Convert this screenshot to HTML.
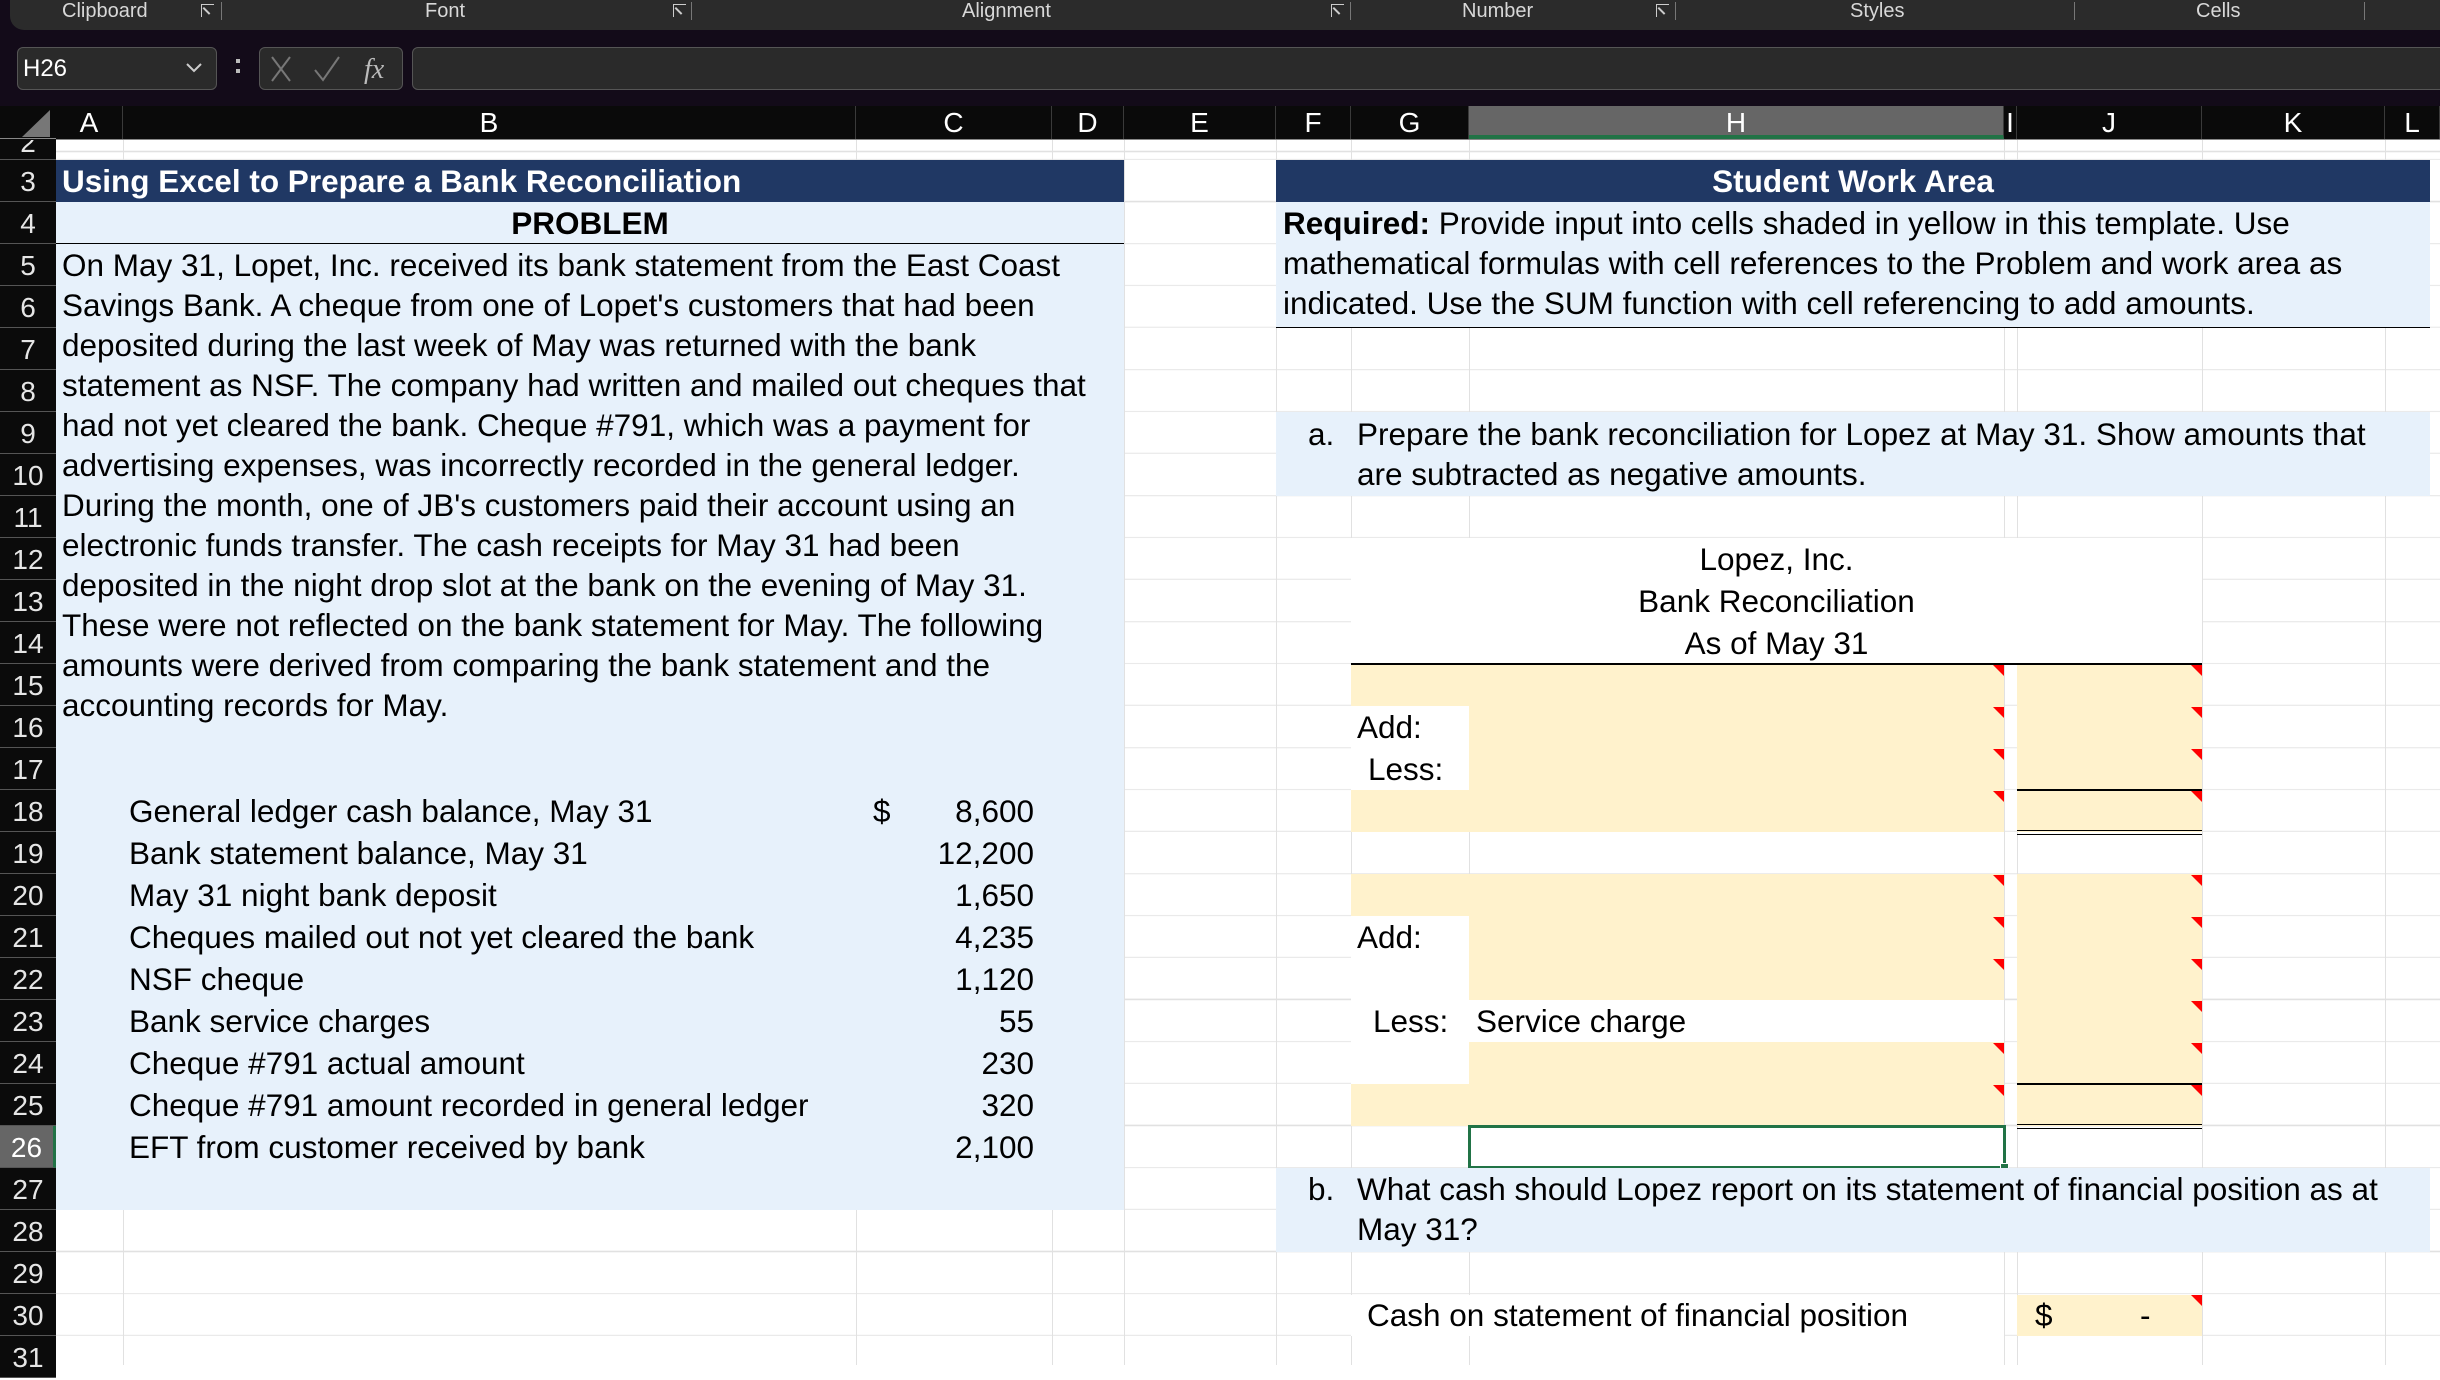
<!DOCTYPE html>
<html><head><meta charset="utf-8">
<style>
*{margin:0;padding:0;box-sizing:border-box}
body{width:2440px;height:1365px;overflow:hidden;background:#fff;position:relative;font-family:"Liberation Sans",Arial,sans-serif}
.a{position:absolute}
.t{position:absolute;font-size:31.5px;line-height:42px;white-space:nowrap;color:#000}
.p{line-height:40px}
.rib{color:#d8d8d8;font-size:20px;line-height:22px;top:0}
.ch{position:absolute;top:106px;height:33px;color:#fff;font-size:28px;line-height:34px;text-align:center;background:#0a0a0a;border-right:1px solid #3a3a3a}
.rh{position:absolute;left:0;width:56px;height:42px;color:#e6e6e6;font-size:28px;line-height:44px;text-align:center;background:#0b0b0b;border-bottom:1px solid #555}
.vl{position:absolute;top:139px;bottom:0;width:1px;background:#e1e1e1}
.y{position:absolute;background:#fff2cc}
.lb{position:absolute;background:#e7f1fb}
.w{position:absolute;background:#fff}
.tri{position:absolute;width:0;height:0;border-top:11px solid #f00;border-left:11px solid transparent}
.num{position:absolute;font-size:31.5px;line-height:42px;text-align:right;width:200px}
.dl{position:absolute;top:4px;width:13px;height:13px;border:1.5px solid #ccc;border-right:none;border-bottom:none}
.dl:after{content:"";position:absolute;left:2px;top:2px;width:9px;height:1.5px;background:#ccc;transform:rotate(45deg);transform-origin:0 0}
</style></head><body>
<div class="a" style="left:0;top:0;width:2440px;height:106px;background:#130b19"></div>
<div class="a" style="left:10px;top:0;width:2430px;height:30px;background:#2b2b2b;border-radius:0 0 0 14px"></div>
<div class="t rib" style="left:62px">Clipboard</div>
<div class="t rib" style="left:425px">Font</div>
<div class="t rib" style="left:962px">Alignment</div>
<div class="t rib" style="left:1462px">Number</div>
<div class="t rib" style="left:1850px">Styles</div>
<div class="t rib" style="left:2196px">Cells</div>
<div class="dl" style="left:201px"></div>
<div class="a" style="left:221px;top:2px;width:1px;height:18px;background:#777"></div>
<div class="dl" style="left:673px"></div>
<div class="a" style="left:691px;top:2px;width:1px;height:18px;background:#777"></div>
<div class="dl" style="left:1331px"></div>
<div class="a" style="left:1350px;top:2px;width:1px;height:18px;background:#777"></div>
<div class="dl" style="left:1656px"></div>
<div class="a" style="left:1675px;top:2px;width:1px;height:18px;background:#777"></div>
<div class="a" style="left:2074px;top:2px;width:1px;height:18px;background:#777"></div>
<div class="a" style="left:2364px;top:2px;width:1px;height:18px;background:#777"></div>
<div class="a" style="left:17px;top:47px;width:200px;height:43px;background:#2a2a2a;border:1px solid #555;border-radius:6px"></div>
<div class="t" style="left:23px;top:47px;color:#fff;font-size:24px;line-height:43px">H26</div>
<svg class="a" style="left:185px;top:62px" width="18" height="12"><path d="M2 2 L9 9 L16 2" stroke="#ccc" stroke-width="2" fill="none"/></svg>
<div class="a" style="left:236px;top:59px;width:4px;height:4px;background:#bbb"></div>
<div class="a" style="left:236px;top:69px;width:4px;height:4px;background:#bbb"></div>
<div class="a" style="left:259px;top:47px;width:144px;height:43px;background:#2a2a2a;border:1px solid #555;border-radius:6px"></div>
<svg class="a" style="left:268px;top:53px" width="130" height="32"><path d="M4 4 L22 28 M22 4 L4 28" stroke="#777" stroke-width="2"/><path d="M47 17 L55 27 L71 4" stroke="#777" stroke-width="2" fill="none"/><text x="96" y="25" fill="#bbb" font-family="Liberation Serif" font-style="italic" font-size="28">fx</text></svg>
<div class="a" style="left:412px;top:47px;width:2040px;height:43px;background:#2a2a2a;border:1px solid #555;border-radius:6px"></div>

<div class="a" style="left:56px;top:139px;right:0;bottom:0;background:repeating-linear-gradient(to bottom,#e1e1e1 0,#e1e1e1 1px,transparent 1px,transparent 42px);background-position:0 20px"></div>
<div class="vl" style="left:123px"></div><div class="vl" style="left:856px"></div><div class="vl" style="left:1052px"></div><div class="vl" style="left:1124px"></div><div class="vl" style="left:1276px"></div><div class="vl" style="left:1351px"></div><div class="vl" style="left:1469px"></div><div class="vl" style="left:2004px"></div><div class="vl" style="left:2017px"></div><div class="vl" style="left:2202px"></div><div class="vl" style="left:2385px"></div>

<div class="a" style="left:0;top:106px;width:2440px;height:34px;background:#0a0a0a;border-bottom:2px solid #888"></div>
<div class="a" style="left:22px;top:110px;width:0;height:0;border-bottom:27px solid #777;border-left:28px solid transparent"></div>
<div class="ch" style="left:56px;width:67px">A</div>
<div class="ch" style="left:123px;width:733px">B</div>
<div class="ch" style="left:856px;width:196px">C</div>
<div class="ch" style="left:1052px;width:72px">D</div>
<div class="ch" style="left:1124px;width:152px">E</div>
<div class="ch" style="left:1276px;width:75px">F</div>
<div class="ch" style="left:1351px;width:118px">G</div>
<div class="ch" style="left:1469px;width:535px;background:#666;border-bottom:4px solid #217346">H</div>
<div class="ch" style="left:2004px;width:13px">I</div>
<div class="ch" style="left:2017px;width:185px">J</div>
<div class="ch" style="left:2202px;width:183px">K</div>
<div class="ch" style="left:2385px;width:55px">L</div>

<div class="a" style="left:0;top:139px;width:56px;height:1226px;background:#0b0b0b"></div>
<div class="rh" style="top:118px;height:42px;line-height:50px;overflow:hidden;clip-path:inset(22px 0 0 0)">2</div>
<div class="rh" style="top:160px">3</div><div class="rh" style="top:202px">4</div><div class="rh" style="top:244px">5</div><div class="rh" style="top:286px">6</div><div class="rh" style="top:328px">7</div><div class="rh" style="top:370px">8</div><div class="rh" style="top:412px">9</div><div class="rh" style="top:454px">10</div><div class="rh" style="top:496px">11</div><div class="rh" style="top:538px">12</div><div class="rh" style="top:580px">13</div><div class="rh" style="top:622px">14</div><div class="rh" style="top:664px">15</div><div class="rh" style="top:706px">16</div><div class="rh" style="top:748px">17</div><div class="rh" style="top:790px">18</div><div class="rh" style="top:832px">19</div><div class="rh" style="top:874px">20</div><div class="rh" style="top:916px">21</div><div class="rh" style="top:958px">22</div><div class="rh" style="top:1000px">23</div><div class="rh" style="top:1042px">24</div><div class="rh" style="top:1084px">25</div>
<div class="rh" style="top:1126px;background:#666;border-right:3px solid #217346;color:#fff">26</div>
<div class="rh" style="top:1168px">27</div><div class="rh" style="top:1210px">28</div><div class="rh" style="top:1252px">29</div><div class="rh" style="top:1294px">30</div><div class="rh" style="top:1336px">31</div>

<div class="a" style="left:56px;top:160px;width:1068px;height:42px;background:#203864"></div>
<div class="t" style="left:62px;top:160px;color:#fff;font-weight:bold">Using Excel to Prepare a Bank Reconciliation</div>
<div class="lb" style="left:56px;top:202px;width:1068px;height:1008px"></div>
<div class="a" style="left:56px;top:243px;width:1068px;height:1px;background:#000"></div>
<div class="t" style="left:56px;top:202px;width:1068px;text-align:center;font-weight:bold">PROBLEM</div>
<div class="t p" style="left:62px;top:245px">On May 31, Lopet, Inc. received its bank statement from the East Coast<br>Savings Bank. A cheque from one of Lopet's customers that had been<br>deposited during the last week of May was returned with the bank<br>statement as NSF. The company had written and mailed out cheques that<br>had not yet cleared the bank. Cheque #791, which was a payment for<br>advertising expenses, was incorrectly recorded in the general ledger.<br>During the month, one of JB's customers paid their account using an<br>electronic funds transfer. The cash receipts for May 31 had been<br>deposited in the night drop slot at the bank on the evening of May 31.<br>These were not reflected on the bank statement for May. The following<br>amounts were derived from comparing the bank statement and the<br>accounting records for May.</div>

<div class="t" style="left:129px;top:790px">General ledger cash balance, May 31</div>
<div class="t" style="left:129px;top:832px">Bank statement balance, May 31</div>
<div class="t" style="left:129px;top:874px">May 31 night bank deposit</div>
<div class="t" style="left:129px;top:916px">Cheques mailed out not yet cleared the bank</div>
<div class="t" style="left:129px;top:958px">NSF cheque</div>
<div class="t" style="left:129px;top:1000px">Bank service charges</div>
<div class="t" style="left:129px;top:1042px">Cheque #791 actual amount</div>
<div class="t" style="left:129px;top:1084px">Cheque #791 amount recorded in general ledger</div>
<div class="t" style="left:129px;top:1126px">EFT from customer received by bank</div>
<div class="t" style="left:873px;top:790px">$</div>
<div class="num" style="left:834px;top:790px">8,600</div>
<div class="num" style="left:834px;top:832px">12,200</div>
<div class="num" style="left:834px;top:874px">1,650</div>
<div class="num" style="left:834px;top:916px">4,235</div>
<div class="num" style="left:834px;top:958px">1,120</div>
<div class="num" style="left:834px;top:1000px">55</div>
<div class="num" style="left:834px;top:1042px">230</div>
<div class="num" style="left:834px;top:1084px">320</div>
<div class="num" style="left:834px;top:1126px">2,100</div>

<div class="a" style="left:1276px;top:160px;width:1154px;height:42px;background:#203864"></div>
<div class="t" style="left:1276px;top:160px;width:1154px;text-align:center;color:#fff;font-weight:bold">Student Work Area</div>
<div class="lb" style="left:1276px;top:202px;width:1154px;height:126px"></div>
<div class="a" style="left:1276px;top:327px;width:1154px;height:1px;background:#000"></div>
<div class="t p" style="left:1283px;top:203px"><b>Required:</b> Provide input into cells shaded in yellow in this template. Use<br>mathematical formulas with cell references to the Problem and work area as<br>indicated. Use the SUM function with cell referencing to add amounts.</div>

<div class="lb" style="left:1276px;top:412px;width:1154px;height:84px"></div>
<div class="t" style="left:1308px;top:414px;line-height:40px">a.</div>
<div class="t p" style="left:1357px;top:414px">Prepare the bank reconciliation for Lopez at May 31. Show amounts that<br>are subtracted as negative amounts.</div>

<div class="w" style="left:1351px;top:538px;width:851px;height:126px"></div>
<div class="t" style="left:1351px;top:538px;width:851px;text-align:center">Lopez, Inc.</div>
<div class="t" style="left:1351px;top:580px;width:851px;text-align:center">Bank Reconciliation</div>
<div class="t" style="left:1351px;top:622px;width:851px;text-align:center">As of May 31</div>
<div class="a" style="left:1351px;top:663px;width:851px;height:2px;background:#000"></div>

<div class="y" style="left:1351px;top:665px;width:653px;height:41px"></div>
<div class="w" style="left:1351px;top:706px;width:118px;height:84px"></div>
<div class="y" style="left:1469px;top:706px;width:535px;height:84px"></div>
<div class="y" style="left:1351px;top:790px;width:653px;height:42px"></div>
<div class="t" style="left:1357px;top:706px">Add:</div>
<div class="t" style="left:1368px;top:748px">Less:</div>
<div class="y" style="left:2017px;top:665px;width:185px;height:167px"></div>
<div class="a" style="left:2017px;top:789px;width:185px;height:2px;background:#000"></div>
<div class="a" style="left:2017px;top:830px;width:185px;height:5px;border-top:1px solid #000;border-bottom:1px solid #000"></div>

<div class="y" style="left:1351px;top:874px;width:653px;height:42px"></div>
<div class="w" style="left:1351px;top:916px;width:118px;height:168px"></div>
<div class="y" style="left:1469px;top:916px;width:535px;height:84px"></div>
<div class="w" style="left:1469px;top:1000px;width:535px;height:42px"></div>
<div class="y" style="left:1469px;top:1042px;width:535px;height:42px"></div>
<div class="y" style="left:1351px;top:1084px;width:653px;height:42px"></div>
<div class="t" style="left:1357px;top:916px">Add:</div>
<div class="t" style="left:1373px;top:1000px">Less:</div>
<div class="t" style="left:1476px;top:1000px">Service charge</div>
<div class="y" style="left:2017px;top:874px;width:185px;height:252px"></div>
<div class="a" style="left:2017px;top:1083px;width:185px;height:2px;background:#000"></div>
<div class="a" style="left:2017px;top:1124px;width:185px;height:5px;border-top:1px solid #000;border-bottom:1px solid #000"></div>

<div class="a" style="left:1468px;top:1125px;width:538px;height:44px;border:3px solid #217346"></div>
<div class="a" style="left:2000px;top:1163px;width:9px;height:9px;background:#217346;border:1px solid #fff"></div>

<div class="tri" style="left:1993px;top:665px"></div><div class="tri" style="left:1993px;top:707px"></div><div class="tri" style="left:1993px;top:749px"></div><div class="tri" style="left:1993px;top:791px"></div>
<div class="tri" style="left:1993px;top:875px"></div><div class="tri" style="left:1993px;top:917px"></div><div class="tri" style="left:1993px;top:959px"></div><div class="tri" style="left:1993px;top:1043px"></div><div class="tri" style="left:1993px;top:1085px"></div>
<div class="tri" style="left:2191px;top:665px"></div><div class="tri" style="left:2191px;top:707px"></div><div class="tri" style="left:2191px;top:749px"></div><div class="tri" style="left:2191px;top:791px"></div>
<div class="tri" style="left:2191px;top:875px"></div><div class="tri" style="left:2191px;top:917px"></div><div class="tri" style="left:2191px;top:959px"></div><div class="tri" style="left:2191px;top:1001px"></div><div class="tri" style="left:2191px;top:1043px"></div><div class="tri" style="left:2191px;top:1085px"></div>

<div class="lb" style="left:1276px;top:1168px;width:1154px;height:84px"></div>
<div class="t" style="left:1308px;top:1169px;line-height:40px">b.</div>
<div class="t p" style="left:1357px;top:1169px">What cash should Lopez report on its statement of financial position as at<br>May 31?</div>
<div class="w" style="left:1351px;top:1295px;width:653px;height:41px"></div>
<div class="t" style="left:1367px;top:1294px">Cash on statement of financial position</div>
<div class="y" style="left:2017px;top:1295px;width:185px;height:41px"></div>
<div class="t" style="left:2035px;top:1294px">$</div>
<div class="t" style="left:2140px;top:1294px">-</div>
<div class="tri" style="left:2191px;top:1295px"></div>
</body></html>
